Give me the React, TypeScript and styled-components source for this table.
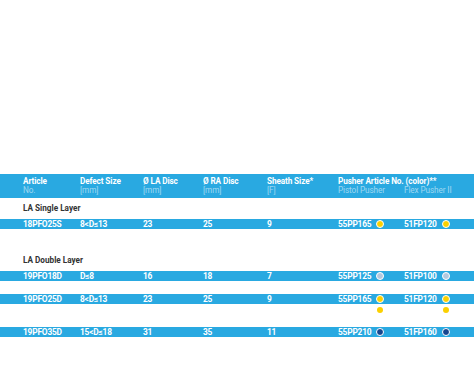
import styled, { createGlobalStyle } from 'styled-components'

const colors = {
  blue: '#29a9e1',
  white: '#ffffff',
  dim: 'rgba(255, 255, 255, 0.55)',
  text: '#333333',
  yellow: '#fbd000',
  silver: '#b4c8de',
  navy: '#17468f',
}

type DotColor = 'yellow' | 'silver' | 'navy'

interface Item {
  article: string
  defect: string
  la: string
  ra: string
  sheath: string
  pistol: string
  flex: string
  color: DotColor
}

const GlobalStyle = createGlobalStyle`
  html, body {
    margin: 0;
    padding: 0;
    background: ${colors.white};
  }
  body {
    font-family: Roboto, 'Liberation Sans', sans-serif;
    font-size: 8px;
  }
`

const Page = styled.div`
  width: 474px;
  height: 374px;
  padding-top: 174px;
  box-sizing: border-box;
  overflow: hidden;
`

const columns = '57px 63px 60px 64px 71px 66px 1fr'

const Header = styled.div`
  display: grid;
  grid-template-columns: ${columns};
  grid-template-rows: 9px 9px;
  height: 24px;
  box-sizing: border-box;
  padding: 3px 0 0 23px;
  background-color: ${colors.blue};
  color: ${colors.white};
  line-height: 9px;
  font-size: 8.2px;
  letter-spacing: -0.1px;
`

const HeadTitle = styled.div<{ $span?: number }>`
  font-weight: 700;
  white-space: nowrap;
  grid-column: span ${(p) => p.$span ?? 1};
`

const HeadUnit = styled.div`
  color: ${colors.dim};
  font-weight: 400;
  white-space: nowrap;
`

const SectionLabel = styled.div<{ $gap?: number }>`
  height: 21px;
  margin-top: ${(p) => p.$gap ?? 0}px;
  padding-left: 23px;
  display: flex;
  align-items: center;
  padding-bottom: 2px;
  box-sizing: border-box;
  font-weight: 700;
  font-size: 8.2px;
  color: ${colors.text};
`

const Row = styled.div<{ $gap?: number }>`
  display: grid;
  grid-template-columns: ${columns};
  align-items: center;
  height: 10px;
  margin-top: ${(p) => p.$gap ?? 0}px;
  padding-left: 23px;
  background-color: ${colors.blue};
  color: ${colors.white};
  font-weight: 700;
  font-size: 8.4px;
  letter-spacing: -0.2px;
  line-height: 10px;
  white-space: nowrap;
`

const DotRow = styled.div`
  display: grid;
  grid-template-columns: ${columns};
  align-items: center;
  height: 12px;
  padding-left: 23px;
`

const Pusher = styled.div`
  display: flex;
  align-items: center;
`

const Code = styled.span`
  width: 38px;
`

const Dot = styled.span<{ $color: DotColor; $ring?: boolean }>`
  display: inline-block;
  width: 6px;
  height: 6px;
  border-radius: 50%;
  background-color: ${(p) => colors[p.$color]};
  border: ${(p) => (p.$ring ? `1px solid ${colors.white}` : 'none')};
  margin-left: ${(p) => (p.$ring ? 0 : 1)}px;
`

const Spacer = styled.div`
  grid-column: span 5;
`

const single: Item[] = [
  { article: '18PFO25S', defect: '8<D≤13', la: '23', ra: '25', sheath: '9', pistol: '55PP165', flex: '51FP120', color: 'yellow' },
]

const double: Item[] = [
  { article: '19PFO18D', defect: 'D≤8', la: '16', ra: '18', sheath: '7', pistol: '55PP125', flex: '51FP100', color: 'silver' },
  { article: '19PFO25D', defect: '8<D≤13', la: '23', ra: '25', sheath: '9', pistol: '55PP165', flex: '51FP120', color: 'yellow' },
  { article: '19PFO35D', defect: '15<D≤18', la: '31', ra: '35', sheath: '11', pistol: '55PP210', flex: '51FP160', color: 'navy' },
]

const DataRow = ({ item, gap }: { item: Item; gap?: number }) => (
  <Row $gap={gap}>
    <div>{item.article}</div>
    <div>{item.defect}</div>
    <div>{item.la}</div>
    <div>{item.ra}</div>
    <div>{item.sheath}</div>
    <Pusher>
      <Code>{item.pistol}</Code>
      <Dot $color={item.color} $ring />
    </Pusher>
    <Pusher>
      <Code>{item.flex}</Code>
      <Dot $color={item.color} $ring />
    </Pusher>
  </Row>
)

export default function App() {
  return (
    <Page>
      <GlobalStyle />
      <Header>
        <HeadTitle>Article</HeadTitle>
        <HeadTitle>Defect Size</HeadTitle>
        <HeadTitle>Ø LA Disc</HeadTitle>
        <HeadTitle>Ø RA Disc</HeadTitle>
        <HeadTitle>Sheath Size*</HeadTitle>
        <HeadTitle $span={2}>Pusher Article No. (color)**</HeadTitle>
        <HeadUnit>No.</HeadUnit>
        <HeadUnit>[mm]</HeadUnit>
        <HeadUnit>[mm]</HeadUnit>
        <HeadUnit>[mm]</HeadUnit>
        <HeadUnit>[F]</HeadUnit>
        <HeadUnit>Pistol Pusher</HeadUnit>
        <HeadUnit>Flex Pusher II</HeadUnit>
      </Header>

      <SectionLabel>LA Single Layer</SectionLabel>
      <DataRow item={single[0]} />

      <SectionLabel $gap={21}>LA Double Layer</SectionLabel>
      <DataRow item={double[0]} />
      <DataRow item={double[1]} gap={13} />
      <DotRow>
        <Spacer />
        <Pusher>
          <Code />
          <Dot $color="yellow" />
        </Pusher>
        <Pusher>
          <Code />
          <Dot $color="yellow" />
        </Pusher>
      </DotRow>
      <DataRow item={double[2]} gap={11} />
    </Page>
  )
}
